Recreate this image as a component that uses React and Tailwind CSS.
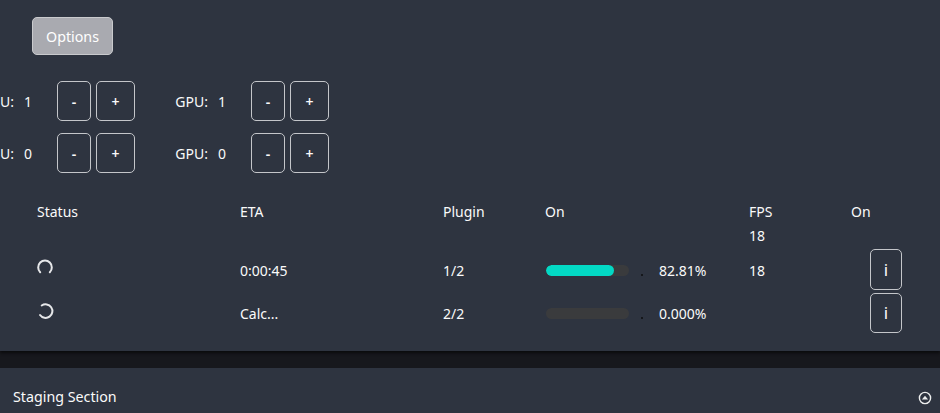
import React from 'react';

const Stepper = ({ label, value }) => (
  <div className="flex items-center">
    <span className="w-[44px] text-right whitespace-nowrap">{label}:</span>
    <span className="w-[43px] pl-[10px]">{value}</span>
    <button className="w-[34px] h-[40px] border-[1.5px] border-[#c4c6ca] rounded-[5px] text-[14px] font-semibold">-</button>
    <button className="w-[39px] h-[40px] ml-[5px] border-[1.5px] border-[#c4c6ca] rounded-[5px] text-[14px] font-semibold">+</button>
  </div>
);

const Spinner = ({ rotate }) => (
  <svg width="18" height="18" viewBox="0 0 18 18" fill="none" className="block ml-[-1px]" style={{ transform: `rotate(${rotate}deg)` }}>
    <path d="M4.2 13.2A6.8 6.8 0 1 1 13.8 13.2" stroke="#e6e7e9" strokeWidth="2" strokeLinecap="round" />
  </svg>
);

const Progress = ({ pct, label }) => (
  <div className="flex items-center">
    <div className="ml-px w-[83px] h-[11px] rounded-full bg-[#3a3b3d] overflow-hidden">
      <div className="h-full rounded-full bg-[#03d9c5]" style={{ width: `${pct}%` }} />
    </div>
    <span className="ml-[12px] mt-[9px] w-[2px] h-[2px] bg-[#15171b]" />
    <span className="ml-[16px]">{label}</span>
  </div>
);

const InfoButton = ({ className }) => (
  <button className={`ml-[19px] w-[32px] border-[1.5px] border-[#c4c6ca] rounded-[5px] text-[17px] ${className}`}>i</button>
);

export default function App() {
  return (
    <div className="w-[940px] h-[413px] overflow-hidden bg-[#17181d] text-[14px] text-[#fafafa] font-['Noto_Sans',sans-serif]">
      <div className="h-[351px] bg-[#2e3440] pt-[17px] shadow-[0_2px_3px_#0a0a0c]">
        <button className="ml-[32px] w-[81px] h-[38px] pt-[2px] bg-[#a9aab0] border-[1.5px] border-[#c9cacd] rounded-[5px] text-[14.25px] text-white">Options</button>

        <div className="mt-[26px] ml-[-30px] flex flex-col gap-[12px]">
          <div className="flex gap-[29px]">
            <Stepper label="CPU" value="1" />
            <Stepper label="GPU" value="1" />
          </div>
          <div className="flex gap-[29px]">
            <Stepper label="CPU" value="0" />
            <Stepper label="GPU" value="0" />
          </div>
        </div>

        <div className="mt-[26px] ml-[37px] grid grid-cols-[203px_203px_102px_204px_102px_1fr] auto-rows-min items-center">
          <div className="h-[24px] leading-[26px]">Status</div>
          <div className="h-[24px] leading-[26px]">ETA</div>
          <div className="h-[24px] leading-[26px]">Plugin</div>
          <div className="h-[24px] leading-[26px]">On</div>
          <div className="h-[24px] leading-[26px]">FPS</div>
          <div className="h-[24px] leading-[26px]">On</div>

          <div className="col-start-5 h-[26px] leading-[25px]">18</div>

          <div className="col-start-1 pb-[3px]"><Spinner rotate={0} /></div>
          <div className="pt-[1px]">0:00:45</div>
          <div className="pt-[1px]">1/2</div>
          <div className="pt-[1px]"><Progress pct={81.6} label="82.81%" /></div>
          <div className="pt-[1px]">18</div>
          <InfoButton className="h-[41px]" />

          <div className="mt-[3px] pb-[4px]"><Spinner rotate={100} /></div>
          <div className="mt-[3px]">Calc...</div>
          <div className="mt-[3px]">2/2</div>
          <div className="mt-[3px]"><Progress pct={0} label="0.000%" /></div>
          <div />
          <div className="mt-[3px]"><InfoButton className="h-[40px]" /></div>
        </div>
      </div>

      <div className="mt-[17px] h-[45px] bg-[#2e3440] pl-[13px] pr-[8px] pt-[19px] flex items-start justify-between">
        <span className="leading-[20px] text-[14.25px]">Staging Section</span>
        <svg width="14" height="14" viewBox="0 0 14 14" fill="none" className="mt-[4px]">
          <circle cx="7" cy="7" r="5.6" stroke="#eceded" strokeWidth="1.4" />
          <path d="M3.9 8.4L7 4.8L10.1 8.4Z" fill="#eceded" />
        </svg>
      </div>
    </div>
  );
}
